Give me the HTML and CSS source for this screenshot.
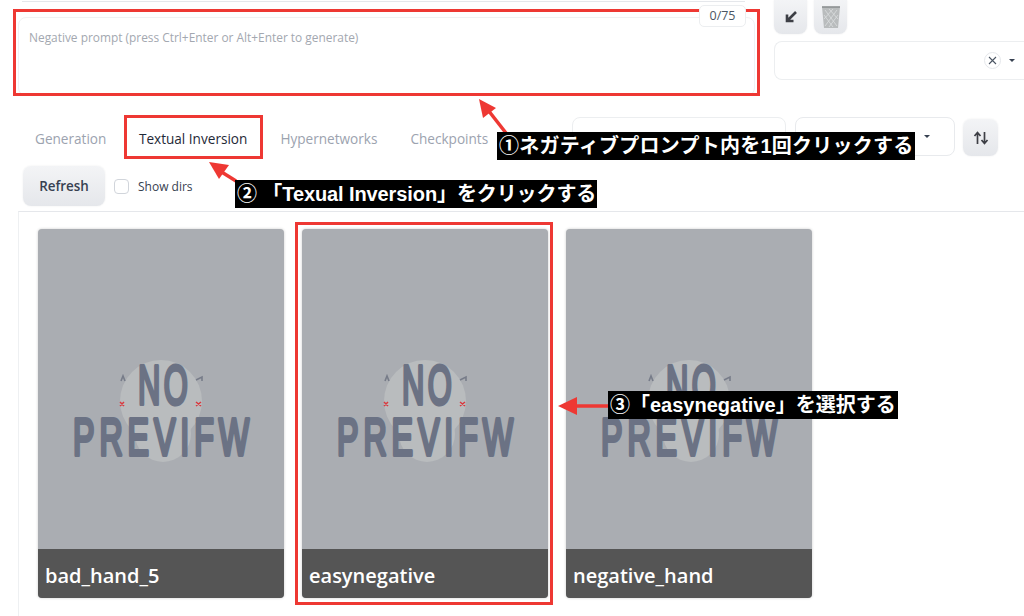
FILE: index.html
```html
<!DOCTYPE html>
<html lang="en">
<head>
    <meta charset="UTF-8">
    <title>Textual Inversion</title>
    <link rel="stylesheet" href="styles.css">
</head>
<body>
<div class="page">

    <div class="top-row">
        <div class="prompt-col">
            <div class="prev-box"></div>
            <div class="prompt-box">
                <span class="placeholder">Negative prompt (press Ctrl+Enter or Alt+Enter to generate)</span>
                <span class="counter">0/75</span>
            </div>
        </div>
        <div class="tools-col">
            <div class="tool-buttons">
                <div class="btn tool-btn">
                    <svg width="14" height="14" viewBox="0 0 14 14"><path d="M12 2 L4 10 M3 4.5 V11 H9.5" stroke="#3d3f45" stroke-width="2.6" fill="none"/></svg>
                </div>
                <div class="btn tool-btn">
                    <svg width="20" height="26" viewBox="0 0 20 26">
                        <path d="M1 3 H19 L17 24 H3 Z" fill="#b9bcbd"/>
                        <path d="M4 6 L16 22 M8 5 L17 15 M3 11 L12 23 M16 6 L4 22 M12 5 L3 15 M17 11 L8 23" stroke="#dcdedf" stroke-width=".8"/>
                        <path d="M1 3 H19" stroke="#8d9092" stroke-width="1.6"/>
                    </svg>
                </div>
            </div>
            <div class="select-box">
                <span class="clear-btn">
                    <svg width="9" height="9" viewBox="0 0 9 9"><path d="M1 1 L8 8 M8 1 L1 8" stroke="#4b5563" stroke-width="1.1"/></svg>
                </span>
                <span class="caret"></span>
            </div>
        </div>
    </div>

    <div class="tab-row">
        <div class="tabs">
            <a class="tab first">Generation</a>
            <a class="tab selected">Textual Inversion</a>
            <a class="tab">Hypernetworks</a>
            <a class="tab">Checkpoints</a>
        </div>
        <div class="tab-tools">
            <div class="search-box"></div>
            <div class="sort-box"><span class="caret"></span></div>
            <div class="btn sort-btn">
                <svg width="16" height="16" viewBox="0 0 16 16"><path d="M4.5 14 V3 M1.5 6 L4.5 2.5 L7.5 6 M11.5 2 V13 M8.5 10 L11.5 13.5 L14.5 10" stroke="#3d3f45" stroke-width="1.7" fill="none"/></svg>
            </div>
        </div>
    </div>

    <div class="action-row">
        <div class="btn refresh-btn">Refresh</div>
        <span class="checkbox"></span>
        <span class="check-label">Show dirs</span>
    </div>

    <div class="gallery">
        <div class="card">
            <svg class="preview" viewBox="0 0 246 320">
                <circle class="blob" cx="123" cy="172" r="41"/>
                <circle class="blob" cx="125" cy="205" r="28"/>
                <path class="ear" d="M83 152 L85 147 L87 152 M158 151 L164 148 L164 152"/>
                <path class="mark" d="M82 173 L86 177 M86 173 L82 177 M158 173 L163 177 M163 173 L158 177"/>
                <text class="no-text" x="100" y="175" textLength="53" lengthAdjust="spacingAndGlyphs">NO</text>
                <text class="preview-text" x="35" y="226" textLength="181" lengthAdjust="spacingAndGlyphs">PREVIFW</text>
            </svg>
            <div class="card-title">bad_hand_5</div>
        </div>
        <div class="card">
            <svg class="preview" viewBox="0 0 246 320">
                <circle class="blob" cx="123" cy="172" r="41"/>
                <circle class="blob" cx="125" cy="205" r="28"/>
                <path class="ear" d="M83 152 L85 147 L87 152 M158 151 L164 148 L164 152"/>
                <path class="mark" d="M82 173 L86 177 M86 173 L82 177 M158 173 L163 177 M163 173 L158 177"/>
                <text class="no-text" x="100" y="175" textLength="53" lengthAdjust="spacingAndGlyphs">NO</text>
                <text class="preview-text" x="35" y="226" textLength="181" lengthAdjust="spacingAndGlyphs">PREVIFW</text>
            </svg>
            <div class="card-title">easynegative</div>
        </div>
        <div class="card">
            <svg class="preview" viewBox="0 0 246 320">
                <circle class="blob" cx="123" cy="172" r="41"/>
                <circle class="blob" cx="125" cy="205" r="28"/>
                <path class="ear" d="M83 152 L85 147 L87 152 M158 151 L164 148 L164 152"/>
                <path class="mark" d="M82 173 L86 177 M86 173 L82 177 M158 173 L163 177 M163 173 L158 177"/>
                <text class="no-text" x="100" y="175" textLength="53" lengthAdjust="spacingAndGlyphs">NO</text>
                <text class="preview-text" x="35" y="226" textLength="181" lengthAdjust="spacingAndGlyphs">PREVIFW</text>
            </svg>
            <div class="card-title">negative_hand</div>
        </div>
    </div>

    <!-- annotations over the screenshot -->
    <div class="red-box box-prompt"></div>
    <div class="red-box box-tab"></div>
    <div class="red-box box-card"></div>

    <svg class="arrows" width="1024" height="616" viewBox="0 0 1024 616">
        <path d="M506 133 L488 110" stroke="#ee3833" stroke-width="3.5"/>
        <path d="M479 99 L496 108 L483 118 Z" fill="#ee3833"/>
        <path d="M236 181 L220 171" stroke="#ee3833" stroke-width="3.5"/>
        <path d="M209 162 L229 165 L219 179 Z" fill="#ee3833"/>
        <path d="M608 406 L572 406" stroke="#ee3833" stroke-width="3.5"/>
        <path d="M558 406 L577 397 L577 415 Z" fill="#ee3833"/>
    </svg>

    <div class="note note-1">①ネガティブプロンプト内を1回クリックする</div>
    <div class="note note-2">② 「Texual Inversion」をクリックする</div>
    <div class="note note-3">③「easynegative」を選択する</div>
</div>
</body>
</html>
```

FILE: styles.css
```css
body {
    margin: 0;
    padding: 0;
    background: #fff;
    font-family: "Open Sans", "Noto Sans", sans-serif;
    color: #374151;
}

.page {
    position: relative;
    width: 1024px;
    height: 616px;
    overflow: hidden;
}

.btn {
    display: flex;
    align-items: center;
    justify-content: center;
    background: linear-gradient(to bottom, #f3f4f6, #e5e7eb);
    border-radius: 8px;
    box-shadow: 0 0 2px rgba(0, 0, 0, 0.08);
}

.caret {
    width: 0;
    height: 0;
    border-left: 3px solid transparent;
    border-right: 3px solid transparent;
    border-top: 3px solid #374151;
}

/* top row */
.top-row {
    display: flex;
    height: 115px;
}

.prompt-col {
    width: 737px;
    margin-left: 18px;
    position: relative;
}

.prev-box {
    height: 1px;
    margin: 0 10px 0 4px;
    border-bottom: 1px solid #e5e7eb;
}

.prompt-box {
    height: 79px;
    margin-top: 15px;
    border: 1px solid #f0f1f3;
    border-radius: 8px;
    padding: 7px 10px;
    box-sizing: border-box;
}

.placeholder {
    font-size: 11.9px;
    color: #a3a8b0;
}

.counter {
    position: absolute;
    z-index: 2;
    top: 5px;
    right: 9px;
    width: 47px;
    height: 22px;
    box-sizing: border-box;
    background: #fff;
    border: 1px solid #eceef0;
    border-radius: 5px;
    font-size: 12.5px;
    line-height: 20px;
    text-align: center;
    color: #4b5563;
}

.tools-col {
    flex: 1;
    margin-left: 19px;
}

.tool-buttons {
    display: flex;
    gap: 7px;
}

.tool-btn {
    width: 33px;
    height: 34px;
    border-radius: 0 0 8px 8px;
}

.select-box {
    display: flex;
    align-items: center;
    justify-content: flex-end;
    gap: 8px;
    height: 39px;
    margin-top: 7px;
    padding-right: 9px;
    border: 1px solid #eceef0;
    border-right: none;
    border-radius: 8px 0 0 8px;
    box-sizing: border-box;
}

.clear-btn {
    display: flex;
    align-items: center;
    justify-content: center;
    width: 17px;
    height: 17px;
    box-sizing: border-box;
    border: 1px solid #e5e7eb;
    border-radius: 50%;
}

/* tabs */
.tab-row {
    display: flex;
    height: 45px;
    padding-left: 18px;
}

.tabs {
    display: flex;
    width: 554px;
}

.tab {
    padding: 0 16.5px;
    font-size: 13.6px;
    line-height: 47px;
    color: #9ca3af;
    white-space: nowrap;
}

.tab.first {
    padding-left: 17px;
}

.tab.selected {
    padding: 0 15px;
    margin: 0 1.5px 0 1px;
    color: #1f2937;
}

.tab-tools {
    display: flex;
    align-items: flex-start;
    padding-top: 2px;
}

.search-box {
    width: 214px;
    height: 40px;
    box-sizing: border-box;
    border: 1px solid #eceef0;
    border-radius: 8px;
}

.sort-box {
    display: flex;
    align-items: center;
    justify-content: flex-end;
    width: 160px;
    height: 39px;
    margin-left: 9px;
    padding-right: 24px;
    box-sizing: border-box;
    border: 1px solid #e8eaed;
    border-radius: 8px;
}

.sort-btn {
    width: 35px;
    height: 37px;
    margin-left: 8px;
    margin-top: 2px;
}

/* refresh row */
.action-row {
    display: flex;
    align-items: center;
    height: 40px;
    margin: 6px 0 5px 23px;
}

.refresh-btn {
    width: 82px;
    height: 40px;
    font-size: 13.4px;
    font-weight: 600;
    color: #374151;
}

.checkbox {
    width: 15px;
    height: 15px;
    margin-left: 9px;
    box-sizing: border-box;
    border: 1px solid #d1d5db;
    border-radius: 4px;
}

.check-label {
    margin-left: 9px;
    font-size: 12px;
    color: #374151;
}

/* gallery */
.gallery {
    display: flex;
    gap: 18px;
    margin-left: 18px;
    padding: 17px 19px;
    border-top: 1px solid #e5e7eb;
    border-left: 1px solid #eef0f2;
    height: 400px;
}

.card {
    display: flex;
    flex-direction: column;
    width: 246px;
    height: 369px;
    background: #aaadb2;
    border-radius: 4px;
    overflow: hidden;
    box-shadow: 0 0 3px rgba(0, 0, 0, 0.2);
}

.preview {
    display: block;
    flex: none;
    width: 246px;
    height: 320px;
}

.blob {
    fill: #b9bcbe;
}

.ear {
    fill: none;
    stroke: #777c89;
    stroke-width: 1.6;
}

.mark {
    fill: none;
    stroke: #d9393f;
    stroke-width: 1.5;
}

.no-text, .preview-text {
    font-family: "Liberation Sans", sans-serif;
    font-weight: 400;
    fill: #6b7284;
    stroke: #6b7284;
    stroke-width: 4;
    stroke-linejoin: round;
}

.no-text {
    font-size: 56px;
    letter-spacing: 6px;
}

.preview-text {
    font-size: 52px;
    letter-spacing: 8px;
}

.card-title {
    flex: 1;
    padding: 4px 0 0 7px;
    background: #555;
    color: #fff;
    font-size: 20px;
    font-weight: 600;
    line-height: 45px;
}

/* annotations */
.red-box {
    position: absolute;
    border: 3.5px solid #ee3833;
    box-sizing: border-box;
}

.box-prompt {
    left: 13px;
    top: 9px;
    width: 747px;
    height: 87px;
}

.box-tab {
    left: 124px;
    top: 115px;
    width: 139px;
    height: 44px;
}

.box-card {
    left: 295px;
    top: 222px;
    width: 258px;
    height: 383px;
}

.arrows {
    position: absolute;
    left: 0;
    top: 0;
}

.note {
    position: absolute;
    height: 28px;
    background: #000;
    color: #fff;
    font-family: "Liberation Sans", "Noto Sans CJK JP", sans-serif;
    font-weight: 700;
    font-size: 20px;
    line-height: 28px;
    white-space: nowrap;
    padding: 0 2px;
    box-sizing: border-box;
}

.note-1 {
    left: 497px;
    top: 132px;
    width: 418px;
    letter-spacing: 0.25px;
}

.note-2 {
    left: 235px;
    top: 180px;
    width: 362px;
    letter-spacing: -0.1px;
}

.note-3 {
    left: 608px;
    top: 391px;
    width: 290px;
}
```
